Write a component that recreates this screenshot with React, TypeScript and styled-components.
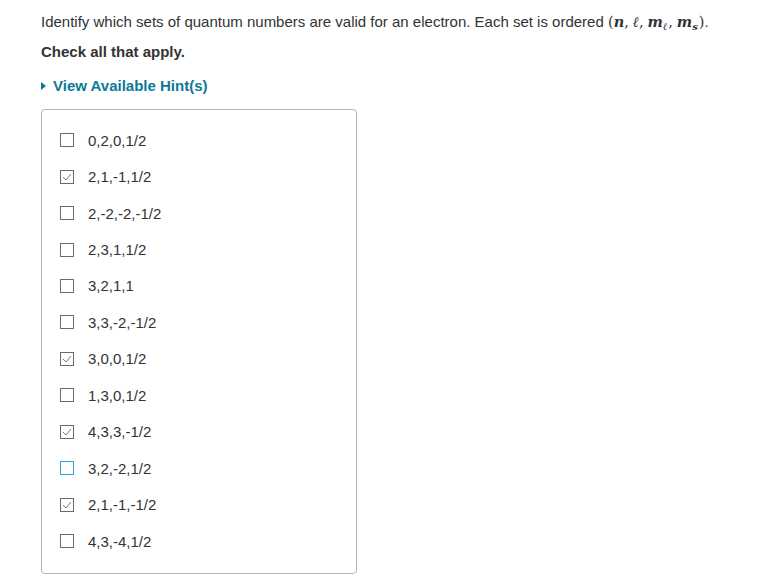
import styled, { createGlobalStyle } from "styled-components";

const GlobalStyle = createGlobalStyle`
    body {
        margin: 0;
        background: #ffffff;
        font-family: "Liberation Sans", Arial, sans-serif;
        color: #333333;
    }
`;

type Choice = { label: string; checked?: boolean; focused?: boolean };

const choices: Array<Choice> = [
    { label: "0,2,0,1/2" },
    { label: "2,1,-1,1/2", checked: true },
    { label: "2,-2,-2,-1/2" },
    { label: "2,3,1,1/2" },
    { label: "3,2,1,1" },
    { label: "3,3,-2,-1/2" },
    { label: "3,0,0,1/2", checked: true },
    { label: "1,3,0,1/2" },
    { label: "4,3,3,-1/2", checked: true },
    { label: "3,2,-2,1/2", focused: true },
    { label: "2,1,-1,-1/2", checked: true },
    { label: "4,3,-4,1/2" },
];

const CheckMark = () => (
    <svg width="10" height="8" viewBox="0 0 10 8">
        <path d="M1 4 L4 7 L9 1" fill="none" stroke="#777" strokeWidth="1" />
    </svg>
);

export default function App() {
    return (
        <Page>
            <GlobalStyle />
            <Prompt>
                Identify which sets of quantum numbers are valid for an electron. Each set is ordered{" "}
                <Math>
                    (<Var>n</Var>,<Gap /><Var>ℓ</Var>,<Gap /><Var>m</Var>
                    <Sub>ℓ</Sub>,<Gap /><Var>m</Var>
                    <Sub>s</Sub>)
                </Math>
                .
            </Prompt>
            <Instruction>Check all that apply.</Instruction>
            <HintToggle>
                <Caret />
                View Available Hint(s)
            </HintToggle>
            <ChoiceBox>
                {choices.map((choice, index) => (
                    <ChoiceRow key={index}>
                        <Box focused={choice.focused}>{choice.checked && <CheckMark />}</Box>
                        <Label>{choice.label}</Label>
                    </ChoiceRow>
                ))}
            </ChoiceBox>
        </Page>
    );
}

const Page = styled.div`
    padding: 12px 0 0 41px;
    font-size: 15px;
`;

const Prompt = styled.p`
    margin: 0;
    line-height: 20px;
    color: #333;
`;

const Math = styled.span`
    font-family: "DejaVu Serif", "Liberation Serif", serif;
    font-size: 14.5px;
    line-height: 0;
`;

const Gap = styled.span`
    display: inline-block;
    width: 4px;
`;

const Var = styled.i`
    font-weight: bold;
    font-style: italic;
`;

const Sub = styled.i`
    font-weight: bold;
    font-size: 10px;
    position: relative;
    top: 3px;
    line-height: 0;
    margin-right: 1px;
`;

const Instruction = styled.p`
    margin: 10px 0 0;
    line-height: 20px;
    font-weight: bold;
`;

const HintToggle = styled.div`
    margin-top: 14px;
    display: flex;
    align-items: center;
    gap: 7px;
    line-height: 20px;
    font-weight: bold;
    color: #0b7a99;
`;

const Caret = styled.span`
    width: 0;
    height: 0;
    border-top: 4px solid transparent;
    border-bottom: 4px solid transparent;
    border-left: 5px solid #0b7a99;
`;

const ChoiceBox = styled.div`
    margin-top: 13px;
    width: 316px;
    box-sizing: border-box;
    border: 1px solid #b4b4b4;
    border-radius: 4px;
    padding: 12px 0 14px 18px;
`;

const ChoiceRow = styled.div`
    height: 36.45px;
    display: flex;
    align-items: center;
    gap: 14px;
`;

const Box = styled.span<{ focused?: boolean }>`
    width: 14px;
    height: 14px;
    box-sizing: border-box;
    border: 1px solid ${props => (props.focused ? "#2a9fd8" : "#6b6b6b")};
    display: flex;
    align-items: center;
    justify-content: center;
`;

const Label = styled.span`
    color: #333;
`;
